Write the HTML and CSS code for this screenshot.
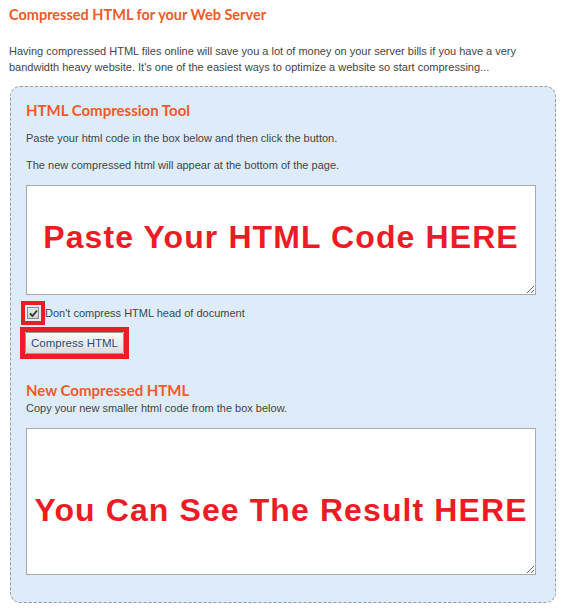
FILE: index.html
```html
<!DOCTYPE html>
<html lang="en">
<head>
    <meta charset="UTF-8">
    <meta name="viewport" content="width=device-width, initial-scale=1.0">
    <title>Compressed HTML for your Web Server</title>
    <link rel="stylesheet" href="styles.css">
</head>
<body>
    <div class="page">
        <h1>Compressed HTML for your Web Server</h1>
        <p class="intro">Having compressed HTML files online will save you a lot of money on your server bills if you have a very bandwidth heavy website. It's one of the easiest ways to optimize a website so start compressing...</p>

        <div class="tool">
            <h2>HTML Compression Tool</h2>
            <p class="note">Paste your html code in the box below and then click the button.</p>
            <p class="note">The new compressed html will appear at the bottom of the page.</p>

            <div class="area-wrap">
                <textarea class="code-in"></textarea>
                <div class="overlay">Paste Your HTML Code HERE</div>
            </div>

            <label class="check-row">
                <span class="mark">
                    <span class="box">
                        <svg width="9" height="9" viewBox="0 0 9 9"><path d="M1 4.5 L3.5 7 L8 1.5" fill="none" stroke="#333" stroke-width="1.8"/></svg>
                    </span>
                </span>
                Don't compress HTML head of document
            </label>

            <div class="btn-mark"><button type="button">Compress HTML</button></div>

            <h2 class="second">New Compressed HTML</h2>
            <p class="note tight">Copy your new smaller html code from the box below.</p>

            <div class="area-wrap">
                <textarea class="code-out"></textarea>
                <div class="overlay low">You Can See The Result HERE</div>
            </div>
        </div>
    </div>
</body>
</html>
```

FILE: styles.css
```css
body {
    margin: 0;
    background: #fff;
    font-family: "Liberation Sans", Arial, sans-serif;
    color: #454545;
}
.page {
    padding: 6px 11px 0 9px;
}
h1 {
    margin: 0;
    font-family: Lato, "Open Sans", sans-serif;
    font-size: 14.5px;
    font-weight: bold;
    color: #f05a28;
    line-height: 18px;
}
.intro {
    max-width: 520px;
    margin: 19px 0 0;
    font-size: 11px;
    line-height: 16px;
}
.tool {
    margin: 11px 0 0 1px;
    padding: 13px 19px 27px 15px;
    background: #deebf8;
    border: 1px dashed #999;
    border-radius: 10px;
}
h2 {
    margin: 0;
    font-family: Lato, "Open Sans", sans-serif;
    font-size: 15px;
    font-weight: bold;
    color: #f05a28;
    line-height: 20px;
}
.note {
    margin: 10px 0 0;
    font-size: 11px;
    line-height: 16px;
}
.note + .note {
    margin-top: 11px;
}
.area-wrap {
    position: relative;
    margin-top: 12px;
}
textarea {
    display: block;
    box-sizing: border-box;
    width: 100%;
    margin: 0;
    border: 1px solid #a9a9a9;
    background: #fff;
    resize: vertical;
}
.code-in {
    height: 110px;
}
.code-out {
    height: 147px;
}
.overlay {
    position: absolute;
    left: 0;
    right: 0;
    top: 34px;
    text-align: center;
    font-family: "Liberation Sans", Arial, sans-serif;
    font-weight: bold;
    font-size: 32px;
    letter-spacing: 1.1px;
    color: #ed1c24;
    pointer-events: none;
}
.overlay.low {
    top: 64px;
}
.check-row {
    display: flex;
    align-items: center;
    margin: 6px 0 0 -5px;
    font-size: 11px;
    color: #454545;
}
.mark {
    display: flex;
    align-items: center;
    justify-content: center;
    width: 16px;
    height: 16px;
    border: 4px solid #ed1c24;
}
.box {
    display: flex;
    align-items: center;
    justify-content: center;
    box-sizing: border-box;
    width: 12px;
    height: 12px;
    border: 1px solid #8e8e8e;
    background: linear-gradient(#e6e6e6, #d2d2d2);
}
.btn-mark {
    display: inline-block;
    margin: 2px 0 0 -6px;
    border: 5px solid #ed1c24;
}
button {
    display: block;
    width: 99px;
    height: 22px;
    padding: 0;
    font-family: "Liberation Sans", Arial, sans-serif;
    font-size: 11.5px;
    color: #1f4e85;
    background: linear-gradient(#fafafa, #dcdcdc);
    border: 1px solid #9a9a9a;
    border-radius: 2px;
    cursor: pointer;
}
h2.second {
    margin-top: 21px;
}
.note.tight {
    margin-top: 0;
}
```
